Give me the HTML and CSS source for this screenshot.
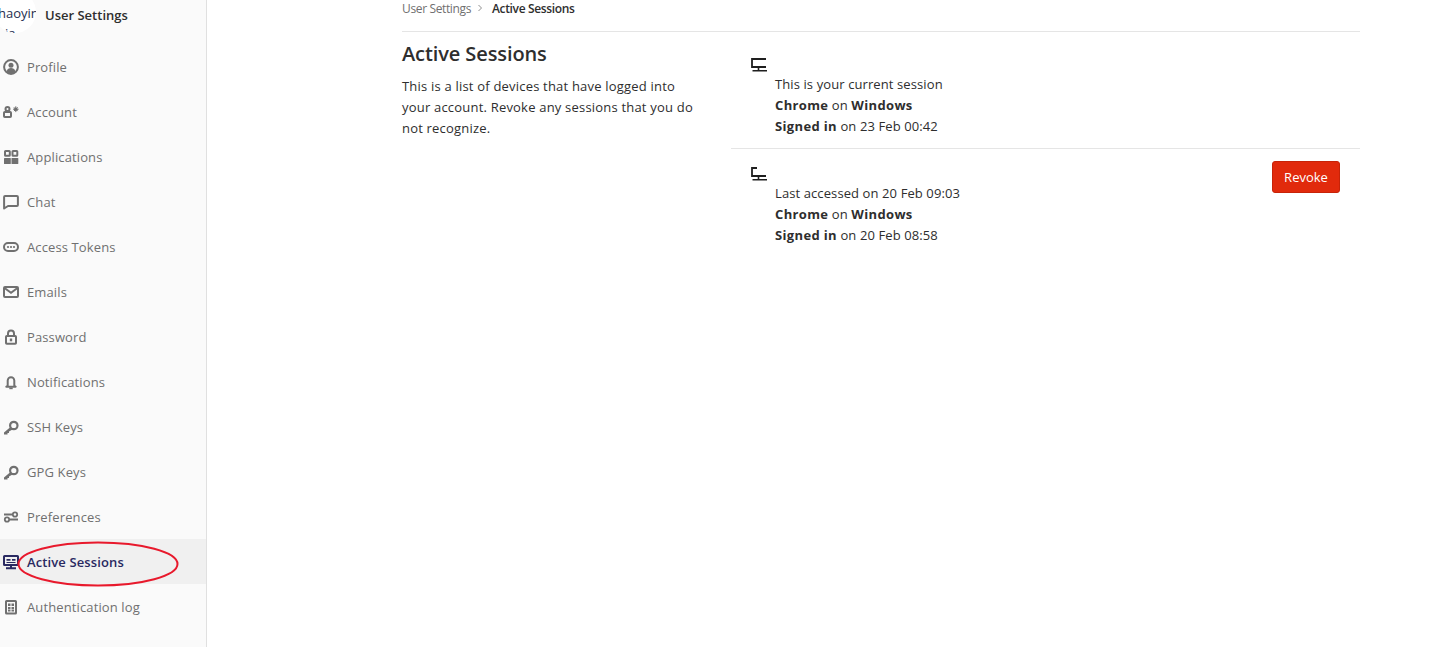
FILE: index.html
```html
<!DOCTYPE html>
<html lang="en">

<head>
    <meta charset="utf-8">
    <title>Active Sessions</title>
    <link rel="stylesheet" href="styles.css">
</head>

<body>
    <div class="page">
        <div class="sidebar">
            <div class="sideHead">
                <div class="avatar"><span>haoyin</span><span class="avatarRest">ia</span></div>
                <div class="sideTitle">User Settings</div>
            </div>
            <div class="nav">
                <div class="item">
                    <svg class="icon" viewBox="0 0 16 16"><circle cx="8" cy="8" r="6.900" fill="none" stroke="currentColor" stroke-width="2"/><circle cx="8" cy="6.300" r="2.500" fill="currentColor"/><path d="M3.600 12.400c.6-2.400 2.400-3.400 4.400-3.400s3.800 1 4.400 3.400L10 14.500H6z" fill="currentColor"/></svg>
                    <span>Profile</span>
                </div>
                <div class="item">
                    <svg class="icon" viewBox="0 0 16 16"><circle cx="4.500" cy="5" r="2" fill="none" stroke="currentColor" stroke-width="2"/><rect x="1" y="8" width="7" height="5" rx=".8" fill="none" stroke="currentColor" stroke-width="2"/><circle cx="12.800" cy="5.200" r="1.700" fill="currentColor"/><path d="M12.800 2.300v5.800M10 5.200h5.600M10.900 3.300l3.800 3.800M14.700 3.300l-3.800 3.800" stroke="currentColor" stroke-width="1"/></svg>
                    <span>Account</span>
                </div>
                <div class="item">
                    <svg class="icon" viewBox="0 0 16 16"><rect x="2" y="2" width="4.800" height="4.800" rx=".6" fill="none" stroke="currentColor" stroke-width="2"/><rect x="9.500" y="2" width="4.800" height="4.800" rx=".6" fill="none" stroke="currentColor" stroke-width="2"/><rect x="1" y="9" width="6.800" height="6" rx=".6" fill="currentColor"/><rect x="8.500" y="9" width="6.800" height="6" rx=".6" fill="currentColor"/></svg>
                    <span>Applications</span>
                </div>
                <div class="item">
                    <svg class="icon" viewBox="0 0 16 16"><path d="M2.100 2h11.800c.5 0 1 .4 1 .9v8.200c0 .5-.5.9-1 .9H5l-3.900 2.500V2.900c0-.5.500-.9 1-.9z" fill="none" stroke="currentColor" stroke-width="2" stroke-linejoin="round"/></svg>
                    <span>Chat</span>
                </div>
                <div class="item">
                    <svg class="icon" viewBox="0 0 16 16"><rect x="1" y="4" width="14" height="8" rx="4" fill="none" stroke="currentColor" stroke-width="2"/><circle cx="5" cy="8" r="1.100" fill="currentColor"/><circle cx="8" cy="8" r="1.100" fill="currentColor"/><circle cx="11" cy="8" r="1.100" fill="currentColor"/></svg>
                    <span>Access Tokens</span>
                </div>
                <div class="item">
                    <svg class="icon" viewBox="0 0 16 16"><rect x="1" y="3" width="14" height="10" rx="1" fill="none" stroke="currentColor" stroke-width="2"/><path d="M1.500 4l6.500 4.800L14.500 4" fill="none" stroke="currentColor" stroke-width="2"/></svg>
                    <span>Emails</span>
                </div>
                <div class="item">
                    <svg class="icon" viewBox="0 0 16 16"><path d="M5 7V4.500a3 3 0 0 1 6 0V7" fill="none" stroke="currentColor" stroke-width="2"/><rect x="3" y="7" width="10" height="7.800" rx=".8" fill="none" stroke="currentColor" stroke-width="2"/><rect x="6.800" y="9.500" width="2.400" height="2.800" fill="currentColor"/></svg>
                    <span>Password</span>
                </div>
                <div class="item">
                    <svg class="icon" viewBox="0 0 16 16"><path d="M4.700 11.500V6.500a3.300 3.300 0 0 1 6.600 0v5l1.400 1.200H3.300z" fill="none" stroke="currentColor" stroke-width="2" stroke-linejoin="round"/><path d="M6.300 13.500h3.400V15.200H6.300z" fill="currentColor"/></svg>
                    <span>Notifications</span>
                </div>
                <div class="item">
                    <svg class="icon" viewBox="0 0 16 16"><circle cx="10.800" cy="6.500" r="3.700" fill="none" stroke="currentColor" stroke-width="2.200"/><path d="M7.500 8L1 13.500V15.500h3.500v-1.500h1.500v-1.500L9.500 10.500z" fill="currentColor"/></svg>
                    <span>SSH Keys</span>
                </div>
                <div class="item">
                    <svg class="icon" viewBox="0 0 16 16"><circle cx="10.800" cy="6.500" r="3.700" fill="none" stroke="currentColor" stroke-width="2.200"/><path d="M7.500 8L1 13.500V15.500h3.500v-1.500h1.500v-1.500L9.500 10.500z" fill="currentColor"/></svg>
                    <span>GPG Keys</span>
                </div>
                <div class="item">
                    <svg class="icon" viewBox="0 0 16 16"><path d="M1 5.500h8M7 10.500h8" stroke="currentColor" stroke-width="2"/><circle cx="12" cy="5.500" r="2.200" fill="none" stroke="currentColor" stroke-width="1.800"/><circle cx="4" cy="10.500" r="2.200" fill="none" stroke="currentColor" stroke-width="1.800"/></svg>
                    <span>Preferences</span>
                </div>
                <div class="item active">
                    <svg class="icon" viewBox="0 0 16 16"><rect x="1" y="2" width="14" height="9" rx=".6" fill="none" stroke="currentColor" stroke-width="2"/><path d="M3.500 5h4v1.800h-4zM9 5h3.500v1.800H9zM3.500 8h9v1h-9z" fill="currentColor"/><path d="M7 11h2v2.500H7zM3 13.200h10V15.200H3z" fill="currentColor"/></svg>
                    <span>Active Sessions</span>
                </div>
                <div class="item">
                    <svg class="icon" viewBox="0 0 16 16"><rect x="3" y="2" width="10" height="12.500" rx=".6" fill="none" stroke="currentColor" stroke-width="2"/><path d="M5 4.500h2.500V7H5zM8.500 4.500H11V7H8.500zM5 8h2.500v2.500H5zM8.500 8H11v2.500H8.500zM5 11h2.500v1.500H5zM8.500 11H11v1.500H8.500z" fill="currentColor"/></svg>
                    <span>Authentication log</span>
                </div>
            </div>
        </div>
        <div class="main">
            <div class="crumbs">
                <span class="crumb">User Settings</span>
                <svg class="chevron" viewBox="0 0 8 8"><path d="M2.500 1l3 3-3 3" fill="none" stroke="#909090" stroke-width="1"/></svg>
                <span class="crumbNow">Active Sessions</span>
            </div>
            <div class="content">
                <div class="intro">
                    <h1>Active Sessions</h1>
                    <p>This is a list of devices that have logged into your account. Revoke any sessions that you do not recognize.</p>
                </div>
                <div class="sessions">
                    <div class="session">
                        <svg class="device" viewBox="0 0 16 14"><path d="M15 1H1v8h14" fill="none" stroke="#1f1f1f" stroke-width="1.800"/><path d="M7.500 9.500V12M1.500 12.800H16" stroke="#1f1f1f" stroke-width="1.600"/></svg>
                        <div class="info">
                            <div class="line">This is your current session</div>
                            <div class="line"><b>Chrome</b> on <b>Windows</b></div>
                            <div class="line"><b>Signed in</b> on 23 Feb 00:42</div>
                        </div>
                    </div>
                    <div class="session">
                        <svg class="device" viewBox="0 0 16 14"><path d="M6 1H1v8h14" fill="none" stroke="#1f1f1f" stroke-width="1.800"/><path d="M7.500 9.500V12M1.500 12.800H16" stroke="#1f1f1f" stroke-width="1.600"/></svg>
                        <div class="info">
                            <div class="line">Last accessed on 20 Feb 09:03</div>
                            <div class="line"><b>Chrome</b> on <b>Windows</b></div>
                            <div class="line"><b>Signed in</b> on 20 Feb 08:58</div>
                        </div>
                        <button class="revoke">Revoke</button>
                    </div>
                </div>
            </div>
        </div>
    </div>
    <svg class="circled" viewBox="0 0 164 48"><ellipse cx="81" cy="23" rx="79.500" ry="21.500" fill="none" stroke="#e8192c" stroke-width="2"/></svg>
</body>

</html>
```

FILE: styles.css
```css
* {
    box-sizing: border-box;
}

html,
body {
    height: 100%;
}

body {
    margin: 0;
    overflow: hidden;
    background: #fff;
    color: #2e2e2e;
    font-family: "Open Sans", "Noto Sans", sans-serif;
    font-size: 13px;
}

.page {
    display: flex;
    height: 647px;
}

.sidebar {
    width: 207px;
    flex-shrink: 0;
    background: #fafafa;
    border-right: 1px solid #e0e0e0;
}

.sideHead {
    display: flex;
    height: 44px;
    overflow: hidden;
}

.avatar {
    width: 42px;
    height: 42px;
    margin: -9px 9px 0 -6px;
    flex-shrink: 0;
    overflow: hidden;
    border-radius: 50%;
    background: #fff;
    color: #1f2f4f;
    font-size: 13px;
    line-height: 20px;
}

.avatar span {
    display: block;
    width: 60px;
    margin: 12px 0 0 4px;
}

.avatar .avatarRest {
    margin: 0 0 0 11px;
}

.sideTitle {
    padding-top: 5px;
    color: #2e2e2e;
    font-size: 13px;
    font-weight: 600;
    line-height: 20px;
}

.item {
    display: flex;
    align-items: center;
    height: 45px;
    padding-left: 3px;
    color: #707070;
    letter-spacing: .12px;
}

.item span {
    margin-left: 8px;
    padding-top: 1px;
}

.item.active {
    background: #f0f0f0;
    color: #292961;
    font-weight: 600;
}

.icon {
    width: 16px;
    height: 16px;
    flex-shrink: 0;
}

.main {
    flex: 1;
    padding: 0 80px 0 195px;
}

.crumbs {
    display: flex;
    align-items: center;
    height: 32px;
    padding-bottom: 15px;
    border-bottom: 1px solid #e5e5e5;
    font-size: 12px;
    letter-spacing: -.36px;
}

.crumb {
    color: #707070;
}

.chevron {
    width: 8px;
    height: 8px;
    margin: 0 8px 0 5px;
}

.crumbNow {
    color: #2e2e2e;
    font-weight: 600;
}

.content {
    display: flex;
}

.intro {
    width: 329px;
    flex-shrink: 0;
    padding-right: 30px;
}

.intro h1 {
    margin: 8px 0 9px;
    font-size: 20px;
    font-weight: 600;
    line-height: 27px;
    letter-spacing: -.1px;
}

.intro p {
    margin: 0;
    line-height: 21px;
    letter-spacing: .2px;
}

.sessions {
    flex: 1;
}

.session {
    display: flex;
    position: relative;
    height: 117px;
    padding: 26px 20px 0 20px;
    border-bottom: 1px solid #e5e5e5;
}

.session+.session {
    height: 109px;
    padding-top: 18px;
    border-bottom: 0;
}

.device {
    width: 16px;
    height: 14px;
    flex-shrink: 0;
}

.info {
    flex: 1;
    margin: 16px 0 0 8px;
    letter-spacing: .1px;
}

.line {
    height: 21px;
    line-height: 21px;
}

.line b {
    font-weight: 700;
    letter-spacing: .35px;
}

.revoke {
    position: absolute;
    top: 12px;
    right: 20px;
    width: 68px;
    height: 32px;
    padding: 0;
    background: #e12a0c;
    border: 1px solid #c72308;
    border-radius: 3px;
    color: #fff;
    font-family: inherit;
    font-size: 13px;
}

.circled {
    position: absolute;
    left: 17px;
    top: 541px;
    width: 164px;
    height: 48px;
}
```
